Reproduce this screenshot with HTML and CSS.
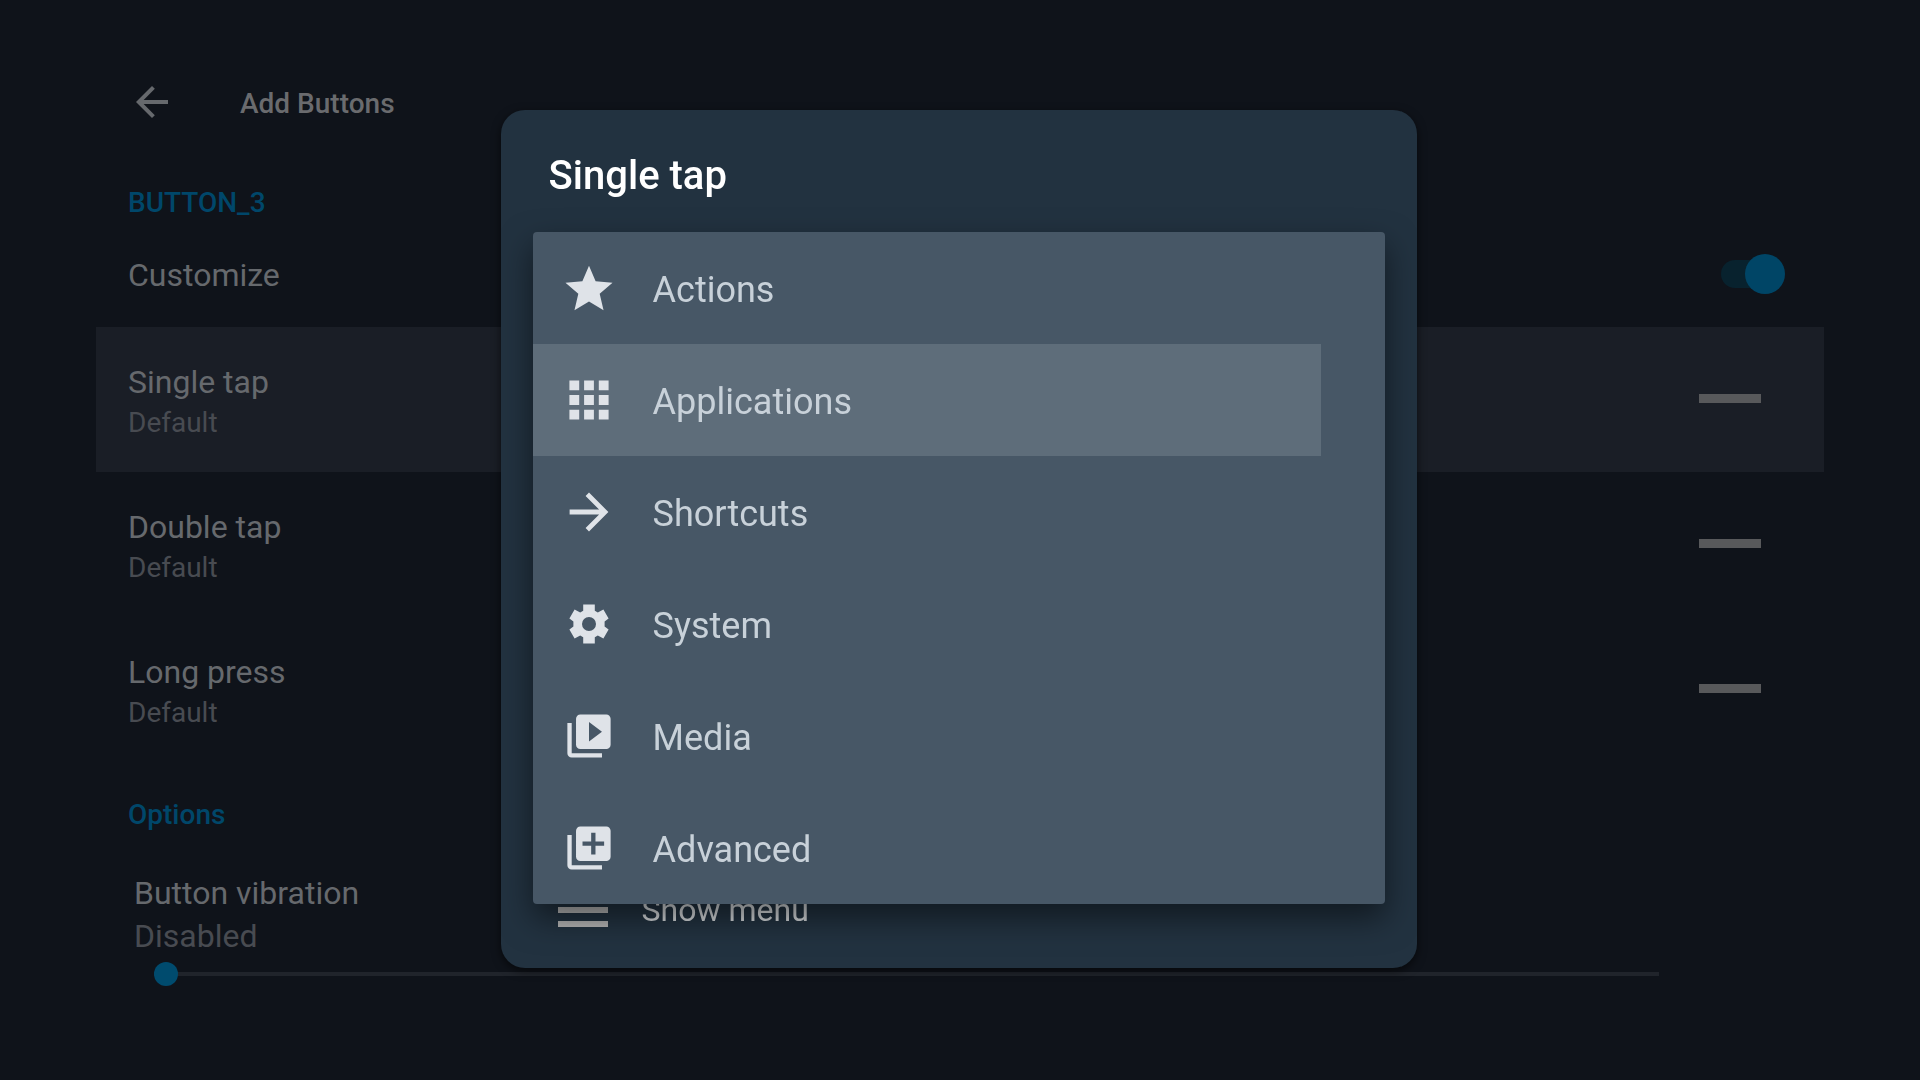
FILE: index.html
```html
<!DOCTYPE html>
<html lang="en">
<head>
  <meta charset="UTF-8">
  <meta name="viewport" content="width=device-width, initial-scale=1">
  <title>Add Buttons</title>
  <link rel="stylesheet" href="styles.css">
</head>
<body>
  <!-- Settings screen -->
  <main class="screen">
    <header class="toolbar">
      <button class="back" aria-label="Back">
        <svg viewBox="0 0 24 24"><path d="M20 11H7.83l5.59-5.59L12 4l-8 8 8 8 1.41-1.41L7.83 13H20v-2z"/></svg>
      </button>
      <h1>Add Buttons</h1>
    </header>

    <h2 class="category">BUTTON_3</h2>
    <div class="pref pref-switch">
      <label for="customize" class="pref-title">Customize</label>
      <input type="checkbox" id="customize" class="switch" checked>
    </div>
    <button class="pref selected">
      <span class="pref-text">
        <span class="pref-title">Single tap</span>
        <span class="pref-summary">Default</span>
      </span>
      <svg class="dash" viewBox="0 0 62 14"><path d="M0 0h62v9H0z"/></svg>
    </button>
    <button class="pref">
      <span class="pref-text">
        <span class="pref-title">Double tap</span>
        <span class="pref-summary">Default</span>
      </span>
      <svg class="dash" viewBox="0 0 62 14"><path d="M0 0h62v9H0z"/></svg>
    </button>
    <button class="pref">
      <span class="pref-text">
        <span class="pref-title">Long press</span>
        <span class="pref-summary">Default</span>
      </span>
      <svg class="dash" viewBox="0 0 62 14"><path d="M0 0h62v9H0z"/></svg>
    </button>

    <h2 class="category options">Options</h2>
    <div class="pref-slider">
      <label for="vibration" class="pref-title">Button vibration</label>
      <span class="slider-value">Disabled</span>
      <input type="range" id="vibration" class="slider" min="0" max="100" value="0">
    </div>
  </main>

  <!-- Dialog -->
  <div class="overlay">
    <section class="dialog" role="dialog" aria-labelledby="dialog-title">
      <h2 id="dialog-title" class="dialog-title">Single tap</h2>
      <div class="dialog-body">
        <button class="dialog-item">
          <svg viewBox="0 0 50 34"><path d="M0 0h50v6H0zM0 14h50v6H0zM0 28h50v6H0z"/></svg>
          <span>Show menu</span>
        </button>

        <!-- Category popup, lies over the list -->
        <div class="popup" role="menu">
          <button class="popup-item" role="menuitem">
            <svg viewBox="1.8 1.3 20.4 20.4"><path d="M12 17.27L18.18 21l-1.64-7.03L22 9.24l-7.19-.61L12 2 9.19 8.63 2 9.24l5.46 4.73L5.82 21z"/></svg>
            <span>Actions</span>
          </button>
          <button class="popup-item focused" role="menuitem">
            <svg viewBox="2.2 2.2 19.6 19.6"><path d="M4 8h4V4H4v4zm6 12h4v-4h-4v4zm-6 0h4v-4H4v4zm0-6h4v-4H4v4zm6 0h4v-4h-4v4zm6-10v4h4V4h-4zm-6 4h4V4h-4v4zm6 6h4v-4h-4v4zm0 6h4v-4h-4v4z"/></svg>
            <span>Applications</span>
          </button>
          <button class="popup-item" role="menuitem">
            <svg viewBox="2.1 2.1 19.8 19.8"><path d="M12 4l-1.41 1.41L16.17 11H4v2h12.17l-5.58 5.59L12 20l8-8z"/></svg>
            <span>Shortcuts</span>
          </button>
          <button class="popup-item" role="menuitem">
            <svg viewBox="0 0 24 24"><path fill-rule="evenodd" d="M9.1 2.2h5.8v3.2l1.5.9 2.8-1.6 2.6 4.5-2 1.5v2.6l2 1.5-2.6 4.5-2.8-1.6-1.5.9v3.2H9.1v-3.2l-1.5-.9-2.8 1.6-2.6-4.5 2-1.5v-2.6l-2-1.5 2.6-4.5 2.8 1.6 1.5-.9zM12 8.5a3.5 3.5 0 1 0 0 7 3.5 3.5 0 0 0 0-7z"/></svg>
            <span>System</span>
          </button>
          <button class="popup-item" role="menuitem">
            <svg viewBox=".9 .9 22.2 22.2"><path d="M4 6H2v14c0 1.1.9 2 2 2h14v-2H4V6zm16-4H8c-1.1 0-2 .9-2 2v12c0 1.1.9 2 2 2h12c1.1 0 2-.9 2-2V4c0-1.1-.9-2-2-2zm-8 12.5v-9l6 4.5-6 4.5z"/></svg>
            <span>Media</span>
          </button>
          <button class="popup-item" role="menuitem">
            <svg viewBox=".9 .9 22.2 22.2"><path d="M4 6H2v14c0 1.1.9 2 2 2h14v-2H4V6zm16-4H8c-1.1 0-2 .9-2 2v12c0 1.1.9 2 2 2h12c1.1 0 2-.9 2-2V4c0-1.1-.9-2-2-2zm-1 9h-4v4h-2v-4H9V9h4V5h2v4h4v2z"/></svg>
            <span>Advanced</span>
          </button>
        </div>
      </div>
    </section>
  </div>
</body>
</html>
```
FILE: styles.css
```css
* {
  margin: 0;
  padding: 0;
  box-sizing: border-box;
}
body {
  font-family: Roboto, "Noto Sans", sans-serif;
  background-color: #0f131a;
  color: #66696d;
  min-height: 100vh;
  overflow: hidden;
}
button {
  font: inherit;
  color: inherit;
  background: none;
  border: none;
  text-align: left;
  cursor: pointer;
}
svg {
  display: block;
  fill: currentColor;
  flex-shrink: 0;
}

/* Settings screen */
.screen {
  padding: 78px 5% 0;
}
.toolbar {
  display: flex;
  align-items: center;
  gap: 64px;
  padding-left: 32px;
}
.toolbar h1 {
  padding-top: 2px;
  font-size: 28px;
  line-height: 33px;
  font-weight: 500;
  color: #6a6b6e;
}
.back svg {
  width: 48px;
  height: 48px;
}
.category {
  margin-top: 60px;
  padding-left: 32px;
  font-size: 28px;
  line-height: 33px;
  font-weight: 500;
  color: #00476a;
}
.options {
  margin-top: 36px;
}
.pref {
  display: flex;
  align-items: center;
  justify-content: space-between;
  width: 100%;
  padding: 36px 63px 33px 32px;
}
.pref-switch {
  padding: 34px 39px 33px 32px;
}
.pref-switch label {
  padding-top: 3px;
}
.selected {
  background-color: #1a1e26;
}
.pref-text {
  display: flex;
  flex-direction: column;
  gap: 5px;
}
.pref-title {
  font-size: 32px;
  line-height: 38px;
}
.pref-summary {
  font-size: 28px;
  line-height: 33px;
  color: #484b51;
}
.dash {
  width: 62px;
  height: 14px;
  color: #58595b;
}

/* Switch: track behind, thumb at the right when on */
.switch {
  appearance: none;
  display: flex;
  align-items: center;
  width: 64px;
  height: 40px;
}
.switch::before {
  content: "";
  width: 56px;
  height: 28px;
  border-radius: 14px;
  background-color: #08222e;
}
.switch::after {
  content: "";
  flex-shrink: 0;
  width: 40px;
  height: 40px;
  margin-left: -32px;
  border-radius: 50%;
  background-color: #004566;
}

/* Slider */
.pref-slider {
  display: flex;
  flex-direction: column;
  padding: 43px 165px 0 38px;
}
.slider-value {
  margin-top: 5px;
  font-size: 32px;
  line-height: 38px;
  color: #484b51;
}
.slider {
  appearance: none;
  height: 24px;
  margin: 7px 0 0 20px;
  background: linear-gradient(#20242b, #20242b) center / 100% 4px no-repeat;
}
.slider::-webkit-slider-thumb {
  appearance: none;
  width: 24px;
  height: 24px;
  border-radius: 50%;
  background-color: #004b6e;
}

/* Dialog */
.overlay {
  position: fixed;
  inset: 0;
  display: flex;
  align-items: center;
  justify-content: center;
  padding: 0 2px 2px 0;
}
.dialog {
  width: 47.8%;
  padding: 42px 32px 32px;
  border-radius: 24px;
  background-color: #223240;
  box-shadow: 0 3px 10px rgba(0, 0, 0, 0.6);
}
.dialog-title {
  padding: 0 16px 33px;
  font-size: 40px;
  line-height: 47px;
  font-weight: 500;
  color: #fff;
}
/* The list and the popup share one grid cell */
.dialog-body {
  display: grid;
}
.dialog-item {
  grid-area: 1 / 1;
  align-self: end;
  display: flex;
  align-items: center;
  gap: 34px;
  height: 52px;
  padding-left: 25px;
  font-size: 32px;
  color: #d5d9dc;
}
.dialog-item svg {
  width: 50px;
  height: 34px;
  color: #b4b4b4;
}
.popup {
  grid-area: 1 / 1;
  z-index: 1;
  display: flex;
  flex-direction: column;
  margin-bottom: 32px;
  border-radius: 4px;
  background-color: #475766;
  box-shadow: 0 14px 32px rgba(0, 0, 0, 0.5);
}
.popup-item {
  display: flex;
  align-items: center;
  gap: 40px;
  height: 112px;
  margin-right: 64px;
  padding-left: 32px;
  font-size: 36px;
  color: #c8d1d9;
}
.popup-item span {
  padding-top: 3px;
}
.popup-item svg {
  width: 48px;
  height: 48px;
  color: #dfe3e8;
}
.focused {
  background-color: #5e6d7a;
}
```
